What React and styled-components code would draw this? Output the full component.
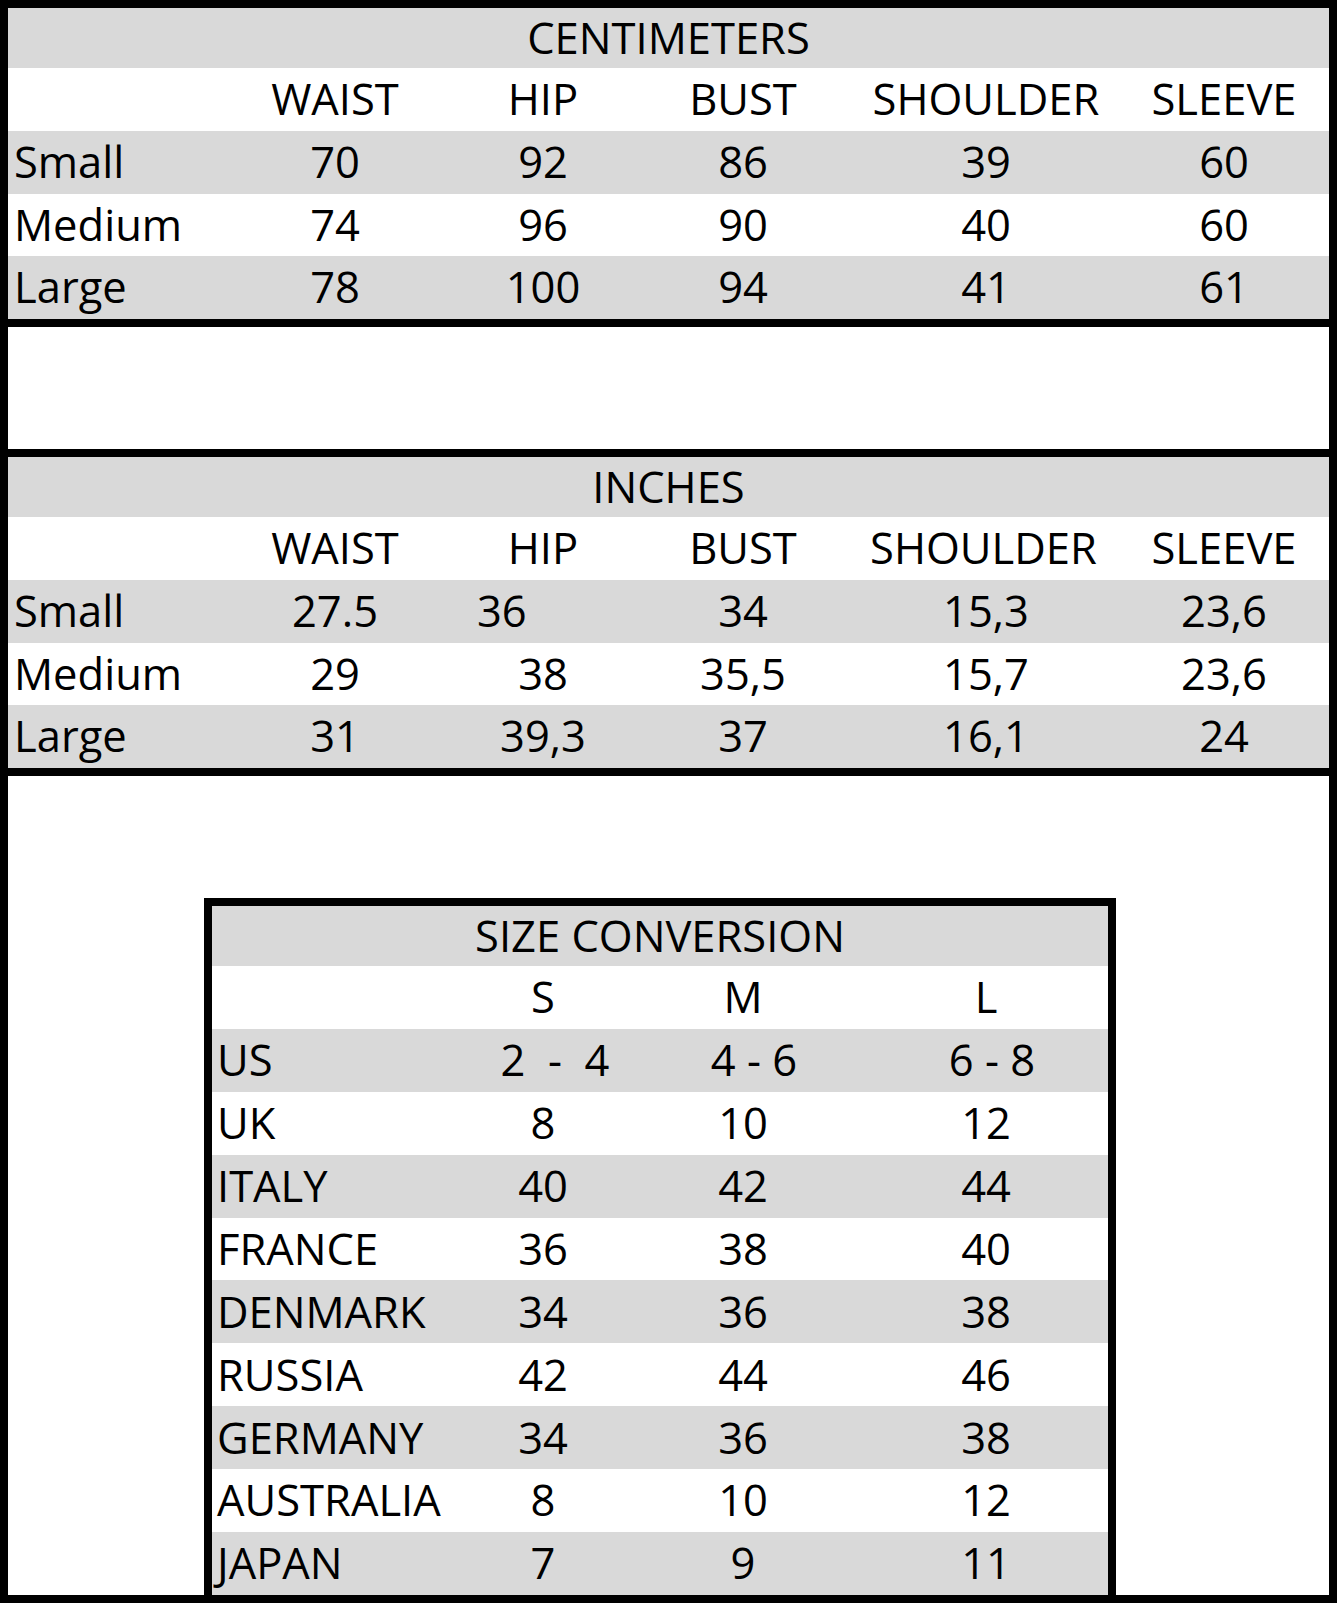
import React from "react";
import styled, { createGlobalStyle } from "styled-components";

const GlobalStyle = createGlobalStyle`
  html, body { margin: 0; padding: 0; background: #ffffff; }
  body { font-family: "Open Sans", "Lato", sans-serif; color: #000; }
  * { box-sizing: border-box; }
`;

const GRAY = "#d9d9d9";
const FONT_SIZE = 43.5;
const MAIN_COLS = "223px 208px 208px 192px 294px 182px 1fr";
const CONV_COLS = "227px 208px 192px 1fr";

const Frame = styled.div`
  width: 1337px;
  height: 1603px;
  border: 8px solid #000;
  display: flex;
  flex-direction: column;
  background: #fff;
`;

const Table = styled.div`
  display: flex;
  flex-direction: column;
`;

const TitleRow = styled.div`
  height: ${(p) => p.$h || 60}px;
  background: ${GRAY};
  display: flex;
  align-items: center;
  justify-content: center;
  font-size: ${FONT_SIZE}px;
  line-height: 1.2;
`;

const Row = styled.div`
  display: grid;
  grid-template-columns: ${(p) => p.$cols};
  height: ${(p) => p.$h}px;
  background: ${(p) => (p.$shade ? GRAY : "#fff")};
  align-items: center;
  font-size: ${FONT_SIZE}px;
  line-height: 1.2;
`;

const Label = styled.div`
  padding-left: ${(p) => p.$pad}px;
  white-space: nowrap;
`;

const Cell = styled.div`
  text-align: ${(p) => (p.$left ? "left" : "center")};
  white-space: pre;
  padding-left: ${(p) => (p.$left ? p.$left : p.$shift > 0 ? p.$shift * 2 : 0) + (p.$inset || 0)}px;
  padding-right: ${(p) => (p.$shift < 0 ? -p.$shift * 2 : 0)}px;
`;

const Divider = styled.div`
  height: 8px;
  background: #000;
  flex: none;
`;

const Gap = styled.div`
  height: 122px;
  flex: none;
`;

const ConversionBox = styled.div`
  margin-left: 196px;
  width: 912px;
  flex: 1;
  border: 8px solid #000;
  border-bottom: none;
  display: flex;
  flex-direction: column;
`;

const MAIN_HEIGHTS = [63, 63, 62, 63];

function MeasureTable({ title, headerShift, rows }) {
  const headers = ["WAIST", "HIP", "BUST", "SHOULDER", "SLEEVE"];
  return (
    <Table>
      <TitleRow $h={60}>{title}</TitleRow>
      <Row $cols={MAIN_COLS} $h={MAIN_HEIGHTS[0]}>
        <Label $pad={6} />
        {headers.map((h, i) => (
          <Cell key={h} $shift={headerShift[i] || 0}>
            {h}
          </Cell>
        ))}
        <div />
      </Row>
      {rows.map((r, ri) => (
        <Row key={r.name} $cols={MAIN_COLS} $h={MAIN_HEIGHTS[ri + 1]} $shade={ri % 2 === 0}>
          <Label $pad={6}>{r.name}</Label>
          {r.values.map((v, i) => (
            <Cell key={i} $shift={v.shift || 0} $left={v.left}>
              {v.t}
            </Cell>
          ))}
          <div />
        </Row>
      ))}
    </Table>
  );
}

const v = (t, extra = {}) => ({ t, ...extra });

const cm = [
  { name: "Small", values: [v("70"), v("92"), v("86"), v("39"), v("60")] },
  { name: "Medium", values: [v("74"), v("96"), v("90"), v("40"), v("60")] },
  { name: "Large", values: [v("78"), v("100"), v("94"), v("41"), v("61")] },
];

const inches = [
  { name: "Small", values: [v("27.5"), v("36", { left: 38 }), v("34"), v("15,3"), v("23,6")] },
  { name: "Medium", values: [v("29"), v("38"), v("35,5"), v("15,7"), v("23,6")] },
  { name: "Large", values: [v("31"), v("39,3"), v("37"), v("16,1"), v("24")] },
];

const conversion = [
  { name: "US", values: [v("2  -  4", { shift: 12 }), v("4 - 6", { shift: 11 }), v("6 - 8", { shift: 6 })] },
  { name: "UK", values: [v("8"), v("10"), v("12")] },
  { name: "ITALY", values: [v("40"), v("42"), v("44")] },
  { name: "FRANCE", values: [v("36"), v("38"), v("40")] },
  { name: "DENMARK", values: [v("34"), v("36"), v("38")] },
  { name: "RUSSIA", values: [v("42"), v("44"), v("46")] },
  { name: "GERMANY", values: [v("34"), v("36"), v("38")] },
  { name: "AUSTRALIA", values: [v("8"), v("10"), v("12")] },
  { name: "JAPAN", values: [v("7"), v("9"), v("11")] },
];

function ConversionTable() {
  return (
    <ConversionBox>
      <TitleRow $h={60}>SIZE CONVERSION</TitleRow>
      <Row $cols={CONV_COLS} $h={62.9}>
        <Label $pad={5} />
        <Cell>S</Cell>
        <Cell>M</Cell>
        <Cell $inset={25}>L</Cell>
      </Row>
      {conversion.map((r, ri) => (
        <Row key={r.name} $cols={CONV_COLS} $h={62.9} $shade={ri % 2 === 0}>
          <Label $pad={5}>{r.name}</Label>
          {r.values.map((c, i) => (
            <Cell key={i} $shift={c.shift || 0} $inset={i === 2 ? 25 : 0}>
              {c.t}
            </Cell>
          ))}
        </Row>
      ))}
    </ConversionBox>
  );
}

export default function App() {
  return (
    <>
      <GlobalStyle />
      <Frame>
        <MeasureTable title="CENTIMETERS" headerShift={[]} rows={cm} />
        <Divider />
        <Gap />
        <Divider />
        <MeasureTable title="INCHES" headerShift={[0, 0, 0, -2.5, 0]} rows={inches} />
        <Divider />
        <Gap />
        <ConversionTable />
      </Frame>
    </>
  );
}
